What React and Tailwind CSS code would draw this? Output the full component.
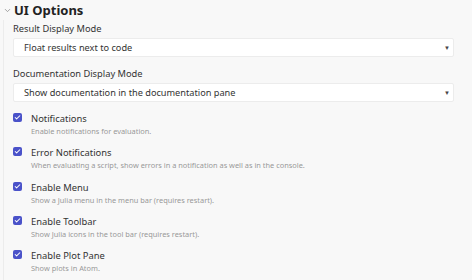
import { Check, ChevronDown } from "lucide-react";

const modes = [
  { label: "Result Display Mode", value: "Float results next to code" },
  { label: "Documentation Display Mode", value: "Show documentation in the documentation pane" },
];

const toggles = [
  { title: "Notifications", desc: "Enable notifications for evaluation." },
  {
    title: "Error Notifications",
    desc: "When evaluating a script, show errors in a notification as well as in the console.",
  },
  { title: "Enable Menu", desc: "Show a Julia menu in the menu bar (requires restart)." },
  { title: "Enable Toolbar", desc: "Show Julia icons in the tool bar (requires restart)." },
  { title: "Enable Plot Pane", desc: "Show plots in Atom." },
];

function SelectBox({ value }) {
  return (
    <div className="h-[19px] w-[441px] bg-white border border-[#ececec] rounded-[2px] flex items-center justify-between pl-[10px] pr-[3px] text-[9.2px] text-[#333]">
      <span>{value}</span>
      <span className="text-[6px] text-[#444] leading-none">▼</span>
    </div>
  );
}

export default function App() {
  return (
    <div
      className="w-[474px] h-[280px] bg-white overflow-hidden"
      style={{ fontFamily: '"Noto Sans", "Open Sans", sans-serif' }}
    >
      <div className="w-[472px] h-full bg-[#f8f8f8]">
        {/* header */}
        <div className="flex items-center h-[20px] pl-[3px] pt-[1px]">
          <ChevronDown className="w-[9px] h-[9px] text-[#888]" strokeWidth={2} />
          <span className="ml-[2px] text-[13px] font-bold text-[#222] leading-none">UI Options</span>
        </div>

        <div className="ml-[3px] border-l border-[#ececec] pl-[9px]">
          {modes.map((m) => (
            <div key={m.label} className="flex flex-col pt-[2px] pb-[8px]">
              <span className="text-[9.3px] text-[#333] leading-[14px] mb-[2px]">{m.label}</span>
              <SelectBox value={m.value} />
            </div>
          ))}

          <div className="flex flex-col pt-[2px]">
            {toggles.map((t) => (
              <div key={t.title} className="flex items-start h-[34.25px]">
                <div className="mt-[1px] w-[9px] h-[9px] rounded-[2px] bg-[#4a52c9] flex items-center justify-center">
                  <Check className="w-[7px] h-[7px] text-white" strokeWidth={3.5} />
                </div>
                <div className="ml-[9px] flex flex-col">
                  <span className="text-[9.4px] text-[#333] leading-[14px]">{t.title}</span>
                  <span className="text-[7.4px] text-[#999] leading-[10px]">{t.desc}</span>
                </div>
              </div>
            ))}
          </div>
        </div>
      </div>
    </div>
  );
}
